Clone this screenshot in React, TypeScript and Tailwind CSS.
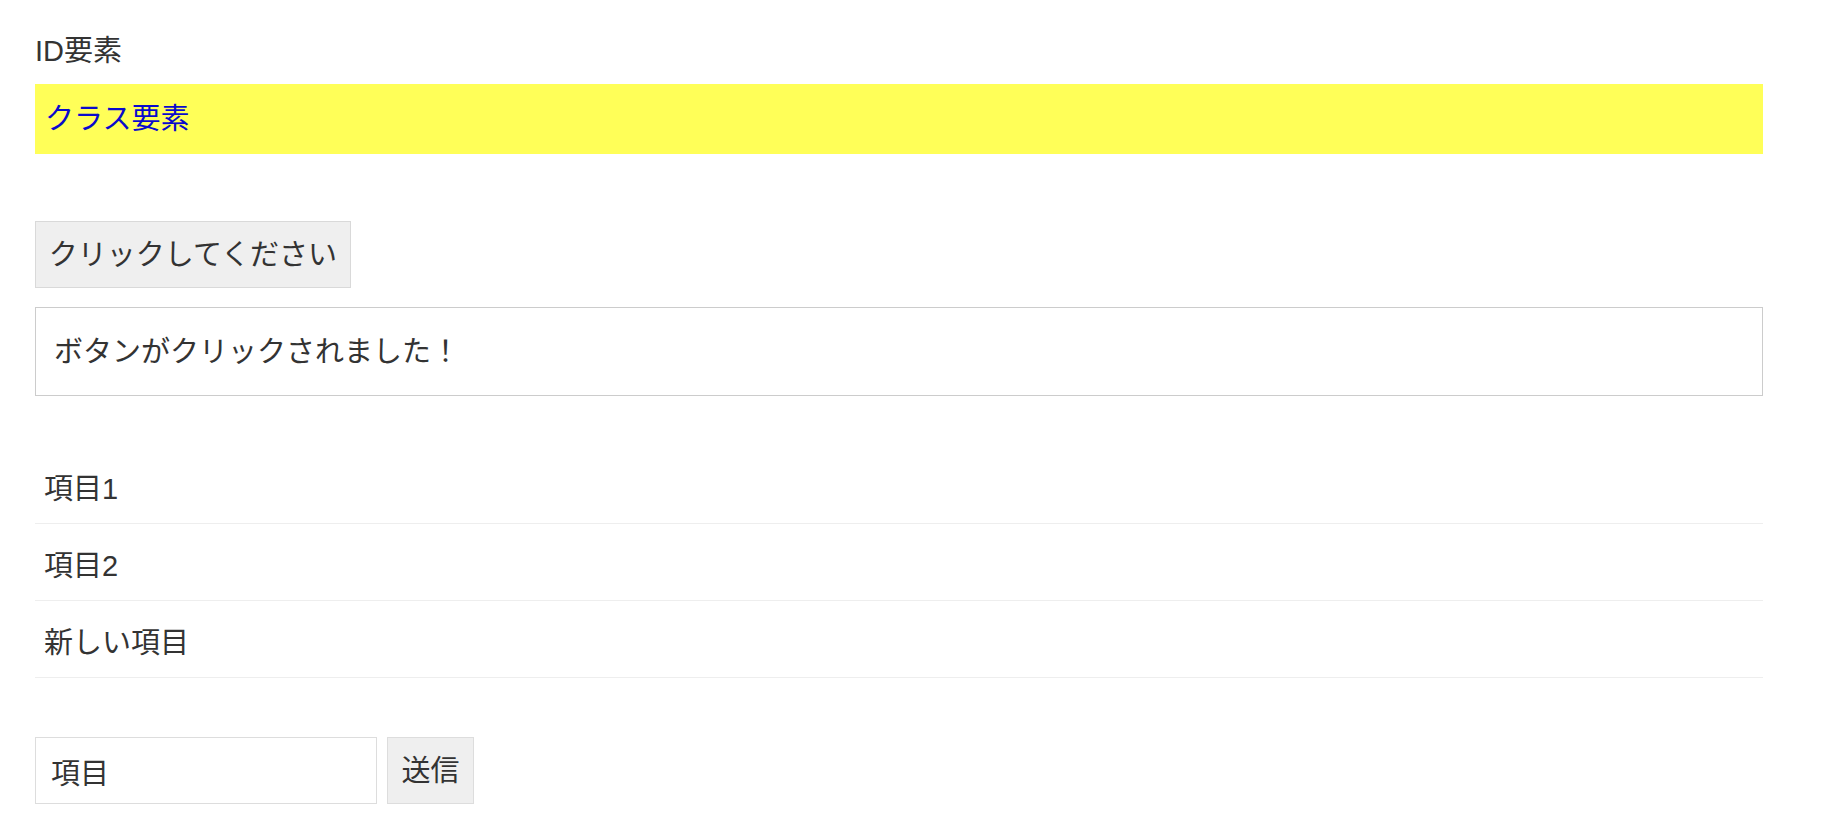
import React from "react";

export default function App() {
  return (
    <div
      className="min-h-screen bg-white text-[#333333] text-[29px]"
      style={{ fontFamily: '"Liberation Sans", "Noto Sans CJK JP", sans-serif' }}
    >
      <div className="pl-[35px] pt-[31px] w-[1763px]">
        <div className="leading-[40px] h-[40px]">ID要素</div>
        <div className="mt-[13px] h-[70px] bg-[#ffff58] text-[#0a0acc] leading-[70px] pl-[10px]">
          クラス要素
        </div>
        <div className="mt-[67px]">
          <button className="w-[316px] h-[67px] bg-[#efefef] border border-[#d9d9d9] leading-[40px] text-[#333333] text-center">
            クリックしてください
          </button>
        </div>
        <div className="mt-[19px] h-[89px] border border-[#cccccc] pl-[18px] flex items-center leading-[40px]">
          ボタンがクリックされました！
        </div>
        <ul className="mt-[51px]">
          {["項目1", "項目2", "新しい項目"].map((t) => (
            <li
              key={t}
              className="h-[77px] border-b border-[#eeeeee] pl-[9px] pt-[7px] flex items-center leading-[40px]"
            >
              {t}
            </li>
          ))}
        </ul>
        <div className="mt-[59px] flex gap-[10px]">
          <input
            readOnly
            defaultValue="項目"
            className="w-[342px] h-[67px] border border-[#dddddd] px-[15px] text-[#333333] outline-none"
          />
          <button className="w-[87px] h-[67px] bg-[#efefef] border border-[#dddddd] text-[#333333] leading-[40px] text-center">
            送信
          </button>
        </div>
      </div>
    </div>
  );
}
